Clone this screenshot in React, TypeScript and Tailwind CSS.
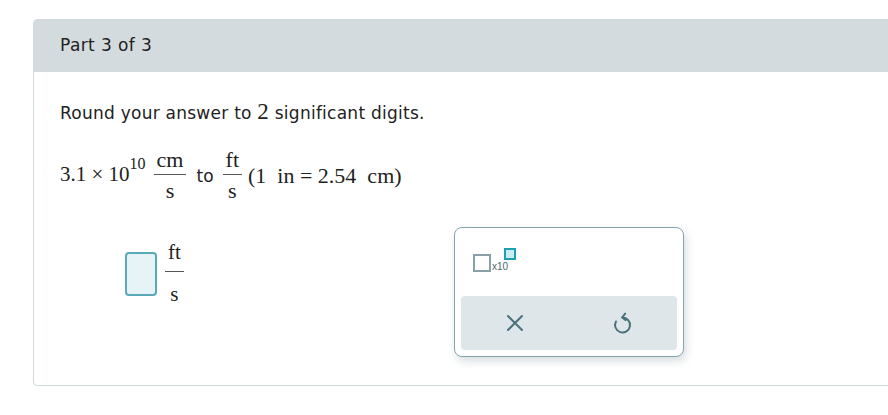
import React from 'react'

const serif = { fontFamily: '"Liberation Serif", "Times New Roman", serif' }

function Frac({ top, bottom, size = 'text-[20px]', gapTop = 'pb-[3px]', gapBottom = 'pt-[5px]' }: { top: string; bottom: string; size?: string; gapTop?: string; gapBottom?: string }) {
  return (
    <span className={`inline-flex flex-col items-center ${size} leading-none`} style={serif}>
      <span className={`px-[3px] ${gapTop}`}>{top}</span>
      <span className="self-stretch h-px bg-[#555]" />
      <span className={`px-[3px] ${gapBottom}`}>{bottom}</span>
    </span>
  )
}

export default function App() {
  return (
    <div
      className="w-[888px] h-[415px] overflow-hidden bg-white pt-[19px] pl-[33px] text-[#222]"
      style={{ fontFamily: '"DejaVu Sans", Verdana, sans-serif' }}
    >
      <div className="w-[880px] h-[367px] border border-[#d0d9dc] rounded-[4px] flex flex-col">
        {/* header */}
        <div className="h-[52px] bg-[#d3dbde] flex items-center pl-[26px] text-[17px] tracking-[0.4px] rounded-t-[3px]">
          Part 3 of 3
        </div>

        {/* body */}
        <div className="pl-[26px] pt-[23px] flex flex-col">
          <div className="text-[17px] tracking-[0.25px] flex items-baseline h-[30px]">
            <span>Round your answer to&nbsp;</span>
            <span className="text-[23px]" style={serif}>2</span>
            <span>&nbsp;significant digits.</span>
          </div>

          <div className="flex items-center mt-[22px] h-[56px]">
            <span className="text-[21px] text-[#222] flex items-start" style={serif}>
              3.1 × 10<span className="text-[16px] -mt-[7px]">10</span>
            </span>
            <span className="ml-[8px]"><Frac top="cm" bottom="s" size="text-[22px]" /></span>
            <span className="text-[17px] mt-[4px] ml-[10px] mr-[9px]">to</span>
            <Frac top="ft" bottom="s" size="text-[22px]" />
            <span className="text-[22px] ml-[6px]" style={serif}>
              (1&nbsp;&nbsp;in = 2.54&nbsp;&nbsp;cm)
            </span>
          </div>

          {/* answer + palette */}
          <div className="flex mt-[24px]">
            <div className="w-[394px] shrink-0">
              <div className="flex items-center gap-[8px] ml-[65px] mt-[15px]">
                <div className="w-[32px] h-[44px] bg-[#e6f4f8] border-2 border-[#5aa9b6] rounded-[4px]" />
                <Frac top="ft" bottom="s" size="text-[21px]" gapTop="pb-[8px]" gapBottom="pt-[12px]" />
              </div>
            </div>

            <div className="w-[230px] h-[130px] border border-[#86a4ad] rounded-[8px] bg-white shadow-[2px_4px_8px_rgba(90,120,130,0.25)] flex flex-col p-[6px]">
              <div className="h-[62px] relative">
                <div className="absolute left-[12px] top-[20px] w-[18px] h-[18px] border-2 border-[#87a0a8]" />
                <span className="absolute left-[31px] top-[28px] text-[10px] text-[#4a6872] leading-none" style={{ fontFamily: '"Liberation Sans", Arial, sans-serif' }}>x10</span>
                <div className="absolute left-[43px] top-[14px] w-[12px] h-[12px] border-2 border-[#1ea0b4] bg-[#c8ecf2]" />
              </div>
              <div className="flex-1 bg-[#dfe6e9] rounded-[4px] flex items-center justify-around">
                <svg width="20" height="20" viewBox="0 0 20 20" fill="none" stroke="#49717c" strokeWidth="2" strokeLinecap="round">
                  <path d="M3 3l14 14M17 3L3 17" />
                </svg>
                <svg width="22" height="28" viewBox="0 0 20 24" fill="none" stroke="#49717c" strokeWidth="1.8" strokeLinecap="round" strokeLinejoin="round">
                  <path d="M9.5 7A6.8 6.8 0 1 1 3.6 10.6" />
                  <path d="M12 3.5L9.2 7l3.3 2.4" />
                </svg>
              </div>
            </div>
          </div>
        </div>
      </div>
    </div>
  )
}
